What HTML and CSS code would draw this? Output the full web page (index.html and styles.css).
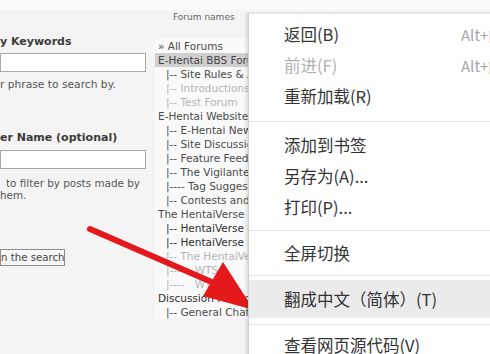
FILE: index.html
```html
<!DOCTYPE html>
<html>
<head>
<meta charset="utf-8">
<link rel="stylesheet" href="styles.css">
</head>
<body>
<div class="page">
  <div class="left">
    <div class="heading h1">y Keywords</div>
    <div class="input i1"></div>
    <div class="desc d1">r phrase to search by.</div>
    <div class="heading h2">er Name (optional)</div>
    <div class="input i2"></div>
    <div class="desc d2"><div class="ind">to filter by posts made by</div><div>hem.</div></div>
    <div class="btn">n the search</div>
  </div>
  <div class="mid">
    <div class="label">Forum names</div>
    <div class="list">
      <div class="row">» All Forums</div>
      <div class="row sel">E-Hentai BBS Forums</div>
      <div class="row c">|-- Site Rules &amp; Announcements</div>
      <div class="row c dis">|-- Introductions</div>
      <div class="row c dis">|-- Test Forum</div>
      <div class="row">E-Hentai Websites</div>
      <div class="row c">|-- E-Hentai News</div>
      <div class="row c">|-- Site Discussions</div>
      <div class="row c">|-- Feature Feedback</div>
      <div class="row c">|-- The Vigilante Corner</div>
      <div class="row c">|---- Tag Suggestions</div>
      <div class="row c">|-- Contests and Events</div>
      <div class="row">The HentaiVerse</div>
      <div class="row c b">|-- HentaiVerse Discussion</div>
      <div class="row c b">|-- HentaiVerse Marketplace</div>
      <div class="row c dis">|-- The HentaiVerse Archive</div>
      <div class="row c dis">|----&nbsp;&nbsp;&nbsp;WTS</div>
      <div class="row c dis">|----&nbsp;&nbsp;&nbsp;WTB</div>
      <div class="row b">Discussion Forums</div>
      <div class="row c">|-- General Chat</div>
    </div>
  </div>
</div>
<svg class="arrow" width="490" height="354" viewBox="0 0 490 354">
  <line x1="90" y1="229" x2="214" y2="283" stroke="#e3191c" stroke-width="6" stroke-linecap="round"/>
  <polygon points="203,296 223,262 254,310" fill="#e3191c"/>
</svg>
<div class="menu">
  <div class="item"><span class="lab">返回(B)</span><span class="sc">Alt+向左箭头</span></div>
  <div class="item dim"><span class="lab">前进(F)</span><span class="sc">Alt+向右箭头</span></div>
  <div class="item"><span class="lab">重新加载(R)</span></div>
  <div class="sep s1"></div>
  <div class="item"><span class="lab">添加到书签</span></div>
  <div class="item"><span class="lab">另存为(A)...</span></div>
  <div class="item"><span class="lab">打印(P)...</span></div>
  <div class="sep s2"></div>
  <div class="item"><span class="lab">全屏切换</span></div>
  <div class="sep s3"></div>
  <div class="item hl"><span class="lab">翻成中文（简体）(T)</span></div>
  <div class="sep s4"></div>
  <div class="item"><span class="lab">查看网页源代码(V)</span></div>
</div>
</body>
</html>
```
FILE: styles.css
```css
html, body {
  margin: 0;
  padding: 0;
  width: 490px;
  height: 354px;
  overflow: hidden;
  background: #f4f4f4;
  font-family: "DejaVu Sans", Verdana, sans-serif;
  color: #444;
}
.page {
  display: flex;
  width: 490px;
  height: 354px;
  background: linear-gradient(#fbfbfb 0, #fbfbfb 9px, #f4f4f4 11px);
}
.left {
  width: 150px;
  flex: none;
  padding-top: 35px;
}
.heading {
  font-weight: bold;
  font-size: 11px;
  line-height: 14px;
  color: #3c3c3c;
  white-space: nowrap;
}
.h2 { margin-top: 39px; }
.input {
  width: 144px;
  height: 17px;
  border: 1px solid #a9a9a9;
  background: #ffffff;
}
.i1 { margin-top: 4px; }
.i2 { margin-top: 5px; }
.desc {
  font-size: 10.7px;
  line-height: 12.5px;
  color: #555;
  white-space: nowrap;
}
.d1 { margin-top: 7px; }
.d2 { margin-top: 8px; font-size: 10.4px; }
.ind { padding-left: 6px; }
.btn {
  margin-top: 47px;
  width: 63px;
  height: 15px;
  border: 1px solid #8c8c8c;
  background: #f7f7f7;
  font-size: 10.2px;
  line-height: 15px;
  color: #444;
  white-space: nowrap;
  overflow: hidden;
}
.mid {
  width: 110px;
  flex: none;
  padding-top: 12px;
  padding-left: 5px;
}
.label {
  font-size: 9px;
  line-height: 11px;
  color: #666;
  padding-left: 18px;
}
.list {
  margin-top: 16px;
  background: #fafafa;
  height: 280px;
  width: 120px;
  white-space: nowrap;
  overflow: hidden;
}
.row {
  font-size: 10.5px;
  line-height: 14px;
  height: 14px;
  padding-left: 3px;
  color: #4a4a4a;
}
.row.c { padding-left: 11px; }
.row.sel { background: #cfcfcf; color: #444; }
.row.dis { color: #b4b4b4; }
.row.b { color: #2e2e2e; }
.arrow {
  position: absolute;
  left: 0;
  top: 0;
  z-index: 2;
}
.menu {
  position: absolute;
  left: 248px;
  top: 13px;
  width: 300px;
  height: 360px;
  z-index: 3;
  background: #ffffff;
  border-left: 1px solid #cfcfcf;
  border-top: 1px solid #e2e2e2;
  box-shadow: -2px 0 3px rgba(0,0,0,0.12);
  padding-top: 5px;
  font-family: "Noto Sans CJK SC", "Noto Sans", sans-serif;
  font-size: 16.5px;
  color: #333;
}
.item {
  display: flex;
  height: 31px;
  line-height: 31px;
  padding-left: 35px;
  white-space: nowrap;
}
.lab { width: 177px; flex: none; }
.sc { color: #a8a8a8; font-size: 15px; }
.item.dim .lab { color: #b0b0b0; }
.item.hl {
  background: #ebebeb;
  height: 38px;
  line-height: 38px;
}
.sep {
  border-top: 1px solid #e6e6e6;
}
.s1 { margin: 9px 0 8px; }
.s2 { margin: 7px 0 7px; }
.s3 { margin: 6px 0 4px; }
.s4 { margin: 6px 0 5px; }
```
